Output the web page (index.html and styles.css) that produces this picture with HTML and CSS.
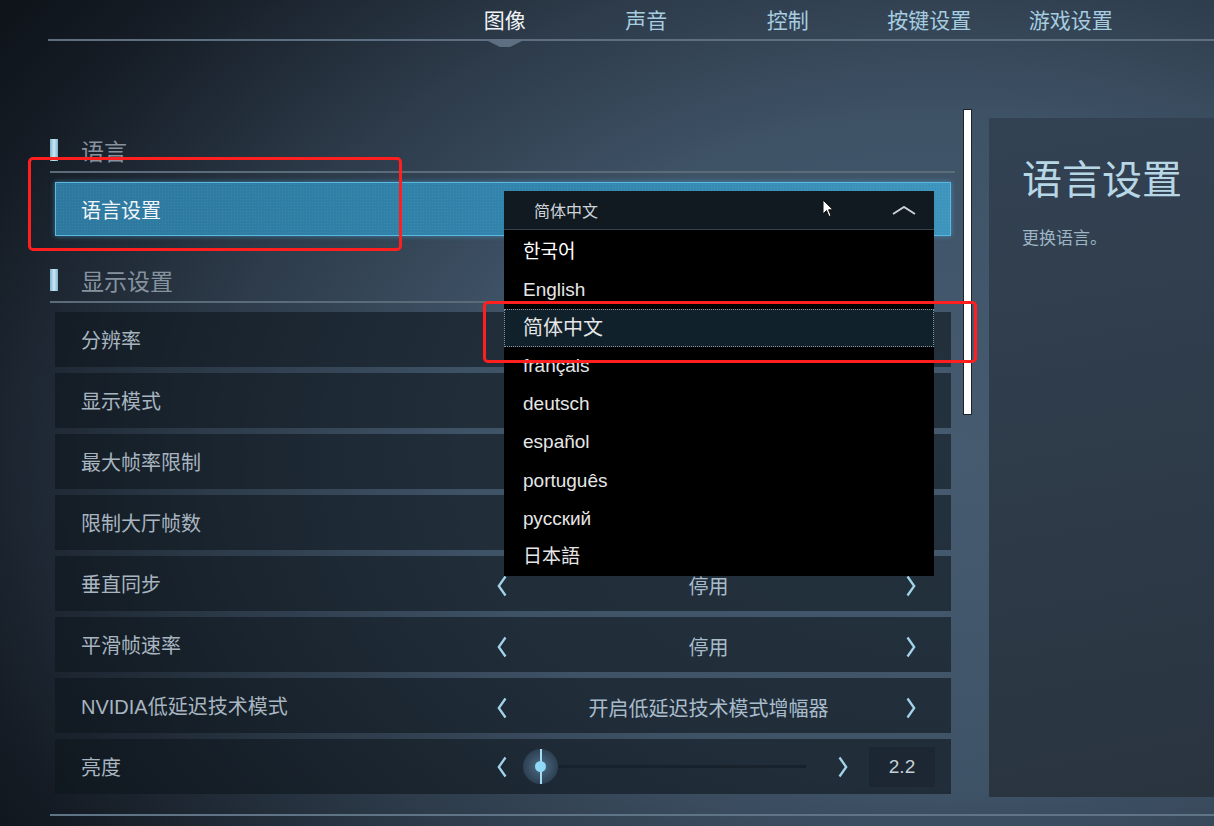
FILE: index.html
```html
<!DOCTYPE html>
<html lang="zh-CN">
<head>
    <meta charset="UTF-8">
    <meta name="viewport" content="width=device-width, initial-scale=1.0">
    <title>设置 | 图像</title>
    <link rel="stylesheet" href="styles.css">
</head>
<body>

    <div class="screen">
        <div class="tabs">
            <a class="tab current">图像</a>
            <a class="tab">声音</a>
            <a class="tab">控制</a>
            <a class="tab">按键设置</a>
            <a class="tab">游戏设置</a>
        </div>

        <div class="content">
            <div class="settings">
                <div class="section-title">语言</div>
                <div class="row active">
                    <span class="label">语言设置</span>

                    <div class="dropdown">
                        <div class="dropdown-head">
                            <span>简体中文</span>
                            <svg class="chevron-up" width="24" height="9" viewBox="0 0 24 9"><polyline points="1,8 12,1 23,8" fill="none" stroke="#c9d1d7" stroke-width="2"/></svg>
                        </div>
                        <ul class="dropdown-list">
                            <li class="strong">한국어</li>
                            <li>English</li>
                            <li class="selected">简体中文</li>
                            <li>français</li>
                            <li>deutsch</li>
                            <li>español</li>
                            <li>português</li>
                            <li>русский</li>
                            <li>日本語</li>
                        </ul>
                        <svg class="cursor" width="12" height="19" viewBox="0 0 12 19"><path d="M1 1 L1 15 L4.5 11.5 L7 17.5 L9 16.6 L6.6 10.8 L11 10.8 Z" fill="#fff" stroke="#111" stroke-width="1"/></svg>
                    </div>
                </div>

                <div class="section-title">显示设置</div>
                <div class="row"><span class="label">分辨率</span></div>
                <div class="row"><span class="label">显示模式</span></div>
                <div class="row"><span class="label">最大帧率限制</span></div>
                <div class="row"><span class="label">限制大厅帧数</span></div>
                <div class="row">
                    <span class="label">垂直同步</span>
                    <div class="control">
                        <svg class="arrow" width="10" height="22" viewBox="0 0 10 22"><polyline points="8.5,1.5 1.8,11 8.5,20.5" /></svg>
                        <span class="value">停用</span>
                        <svg class="arrow" width="10" height="22" viewBox="0 0 10 22"><polyline points="1.5,1.5 8.2,11 1.5,20.5" /></svg>
                    </div>
                </div>
                <div class="row">
                    <span class="label">平滑帧速率</span>
                    <div class="control">
                        <svg class="arrow" width="10" height="22" viewBox="0 0 10 22"><polyline points="8.5,1.5 1.8,11 8.5,20.5" /></svg>
                        <span class="value">停用</span>
                        <svg class="arrow" width="10" height="22" viewBox="0 0 10 22"><polyline points="1.5,1.5 8.2,11 1.5,20.5" /></svg>
                    </div>
                </div>
                <div class="row">
                    <span class="label">NVIDIA低延迟技术模式</span>
                    <div class="control">
                        <svg class="arrow" width="10" height="22" viewBox="0 0 10 22"><polyline points="8.5,1.5 1.8,11 8.5,20.5" /></svg>
                        <span class="value">开启低延迟技术模式增幅器</span>
                        <svg class="arrow" width="10" height="22" viewBox="0 0 10 22"><polyline points="1.5,1.5 8.2,11 1.5,20.5" /></svg>
                    </div>
                </div>
                <div class="row">
                    <span class="label">亮度</span>
                    <div class="slider-control">
                        <svg class="arrow" width="10" height="22" viewBox="0 0 10 22"><polyline points="8.5,1.5 1.8,11 8.5,20.5" /></svg>
                        <div class="track">
                            <div class="knob"></div>
                        </div>
                        <svg class="arrow" width="10" height="22" viewBox="0 0 10 22"><polyline points="1.5,1.5 8.2,11 1.5,20.5" /></svg>
                        <div class="number">2.2</div>
                    </div>
                </div>
            </div>

            <div class="scroll"><div class="thumb"></div></div>

            <aside class="info">
                <h2>语言设置</h2>
                <p>更换语言。</p>
            </aside>
        </div>

        <div class="bottom-line"></div>

        <div class="mark mark-row"></div>
        <div class="mark mark-option"></div>
    </div>

</body>
</html>
```

FILE: styles.css
```css
body {
    margin: 0;
    padding: 0;
    background: #080b0e;
    font-family: "Liberation Sans", "Noto Sans CJK SC", sans-serif;
}
.screen {
    position: relative;
    width: 1214px;
    height: 826px;
    overflow: hidden;
    background: radial-gradient(ellipse 105% 105% at 78% 55%, #465b70 0%, #3f5367 38%, #2d3b4a 58%, #151c25 80%, #080b0e 100%);
}

/* top tabs */
.tabs {
    display: flex;
    height: 39px;
    margin-left: 48px;
    padding-left: 386px;
    border-bottom: 2px solid #5d6f80;
}
.tab {
    position: relative;
    width: 141.5px;
    text-align: center;
    line-height: 42px;
    font-size: 21px;
    color: #a6cde0;
}
.tab.current {
    color: #f0f4f6;
}
.tab.current::after {
    content: "";
    position: absolute;
    left: 54px;
    top: 41px;
    width: 34px;
    height: 6px;
    background: #5d6f80;
    clip-path: polygon(0 0, 100% 0, 65% 100%, 35% 100%);
}

/* main area */
.content {
    display: flex;
    align-items: flex-start;
}
.settings {
    width: 905px;
    margin-left: 50px;
    padding-top: 88px;
}
.section-title {
    display: flex;
    align-items: center;
    gap: 23px;
    height: 42px;
    font-size: 23px;
    color: #86939f;
    border-bottom: 2px solid #5a6b7a;
}
.section-title::before {
    content: "";
    width: 8px;
    height: 22px;
    background: linear-gradient(90deg, #7fb2cd, #cbe8f5, #7fb2cd);
}
.section-title + .row {
    margin-top: 9px;
}
.row {
    display: flex;
    align-items: center;
    height: 55px;
    margin: 6px 4px 0 5px;
    background: rgba(14, 21, 29, 0.6);
    font-size: 20px;
    color: #a8b5c0;
}
.label {
    flex: 0 0 416px;
    padding-left: 26px;
}
.row.active {
    position: relative;
    height: 52px;
    margin-bottom: 23px;
    border: 1px solid #5ab8e2;
    background:
        radial-gradient(rgba(255, 255, 255, 0.07) 0.6px, transparent 0.9px) 0 0 / 3px 3px,
        linear-gradient(90deg, #2d789e 0%, #3285ad 55%, #3d95be 100%);
    box-shadow: 0 0 5px rgba(80, 180, 225, 0.55);
    color: #f2f6f8;
}
.row.active .label {
    padding-left: 25px;
}

/* arrows and values */
.control {
    display: flex;
    align-items: center;
    justify-content: space-between;
    width: 419px;
    padding-top: 4px;
}
.arrow polyline {
    fill: none;
    stroke: #a3d3e9;
    stroke-width: 2.3;
}
.value {
    padding-left: 4px;
    color: #a9bccb;
}
.slider-control {
    display: flex;
    align-items: center;
}
.track {
    position: relative;
    width: 283px;
    height: 35px;
    margin-left: 16px;
    margin-right: 32px;
    background: linear-gradient(#18222c, #18222c) no-repeat 18px center / 265px 3px;
}
.knob {
    position: absolute;
    left: 0;
    top: 0;
    width: 35px;
    height: 35px;
    border-radius: 50%;
    background: radial-gradient(circle, #4d6d86 0%, #34495d 55%, #223140 100%);
}
.knob::before {
    content: "";
    position: absolute;
    left: 16.5px;
    top: 0;
    width: 2px;
    height: 35px;
    background: #a4ddf3;
}
.knob::after {
    content: "";
    position: absolute;
    left: 12px;
    top: 12px;
    width: 11px;
    height: 11px;
    border-radius: 50%;
    background: #8fd8f7;
}
.number {
    width: 66px;
    height: 40px;
    margin-left: 21px;
    line-height: 40px;
    text-align: center;
    background: #1c2733;
    color: #c4d0d8;
    font-size: 19px;
}

/* language dropdown */
.dropdown {
    position: absolute;
    left: 448px;
    top: 8px;
    width: 430px;
    z-index: 5;
}
.dropdown-head {
    display: flex;
    align-items: center;
    justify-content: space-between;
    height: 38px;
    padding: 0 18px 0 30px;
    background: #121a21;
    border-bottom: 1px solid #34434e;
    font-size: 16px;
    color: #cdd4d9;
}
.dropdown-list {
    list-style: none;
    margin: 0;
    padding: 3px 0 0;
    background: #000;
}
.dropdown-list li {
    height: 38.1px;
    line-height: 38px;
    padding-left: 19px;
    font-size: 19px;
    color: #e6e6e6;
}
.dropdown-list li.strong {
    color: #fff;
}
.dropdown-list li.selected {
    background: #10212b;
    outline: 1px dotted #8796a0;
    outline-offset: -1px;
    font-size: 20px;
}
.cursor {
    position: absolute;
    left: 318px;
    top: 8px;
}

/* scrollbar and side panel */
.scroll {
    width: 34px;
    padding-top: 68px;
}
.thumb {
    width: 9px;
    height: 306px;
    margin-left: 8px;
    background: #fff;
    border: 1px solid #1d2328;
    box-sizing: border-box;
}
.info {
    width: 225px;
    height: 679px;
    margin-top: 77px;
    padding: 38px 0 0 33px;
    box-sizing: border-box;
    background: linear-gradient(170deg, #334253, #29343f);
}
.info h2 {
    margin: 0;
    font-size: 40px;
    line-height: 48px;
    font-weight: normal;
    color: #b8d7e6;
}
.info p {
    margin: 23px 0 0;
    font-size: 17px;
    line-height: 24px;
    color: #9db5c4;
}

.bottom-line {
    height: 2px;
    margin: 17px 0 0 50px;
    background: #5f7487;
}

/* red annotation boxes */
.mark {
    position: absolute;
    z-index: 10;
    border: 3px solid #ff1f1f;
    border-radius: 5px;
    box-sizing: border-box;
}
.mark-row {
    left: 28px;
    top: 157px;
    width: 374px;
    height: 94px;
}
.mark-option {
    left: 483px;
    top: 301px;
    width: 494px;
    height: 62px;
}
```
